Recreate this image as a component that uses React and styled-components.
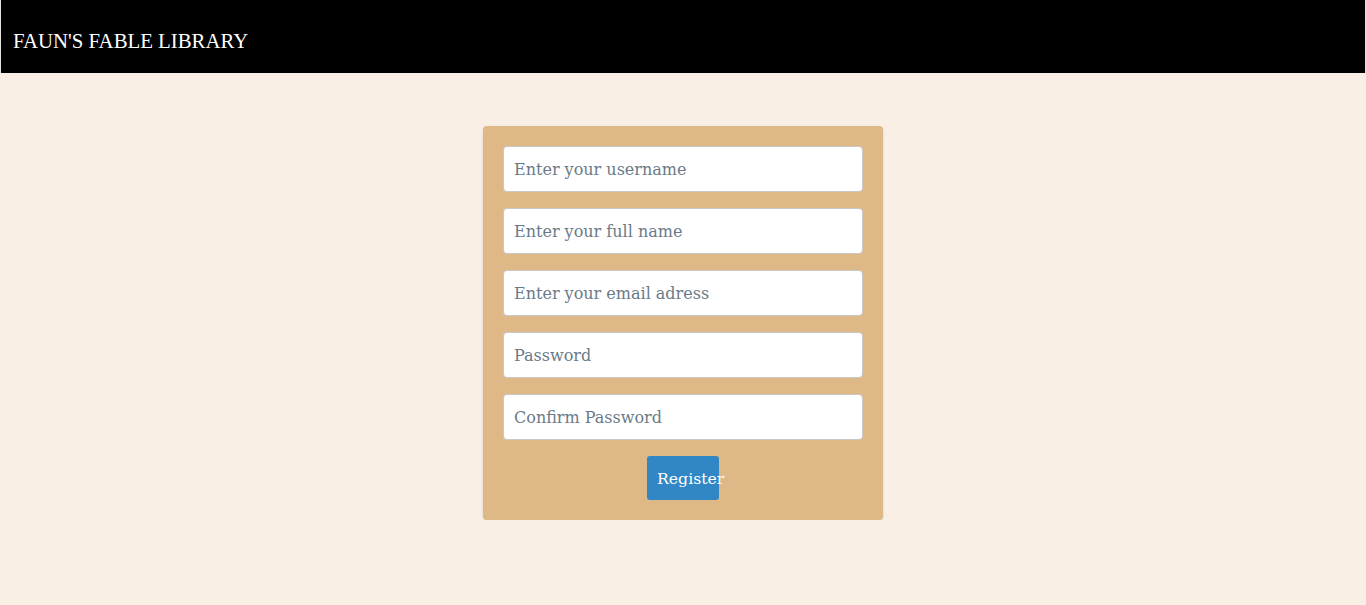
import React from "react";
import styled, { createGlobalStyle } from "styled-components";

const Global = createGlobalStyle`
  html, body { margin: 0; padding: 0; }
  body { background: #f9efe4; font-family: "DejaVu Serif", serif; }
  * { box-sizing: border-box; }
`;

const Header = styled.header`
  height: 73px;
  background: #000;
  border-left: 1px solid #e2e2e2;
  border-right: 1px solid #e2e2e2;
  display: flex;
  align-items: center;
  padding-left: 12px;
`;

const Title = styled.h1`
  margin: 0;
  color: #fff;
  font-family: "Liberation Serif", serif;
  font-weight: normal;
  font-size: 20.8px;
  padding-top: 8px;
`;

const Main = styled.main`
  display: flex;
  justify-content: center;
  padding-top: 53px;
`;

const Card = styled.form`
  width: 400px;
  background: #deb887;
  border-radius: 4px;
  box-shadow: 0 1px 3px rgba(0, 0, 0, 0.12);
  padding: 20px;
  display: flex;
  flex-direction: column;
  gap: 16px;
  align-items: center;
`;

const Input = styled.input`
  width: 360px;
  height: 46px;
  border: 1px solid #c8c8c8;
  border-radius: 4px;
  background: #fff;
  padding: 0 10px;
  font-family: "DejaVu Serif", serif;
  font-size: 16px;
  &::placeholder { color: #6b7a88; }
`;

const Button = styled.button`
  width: 72px;
  height: 44px;
  background: #3187c6;
  border: none;
  border-radius: 3px;
  color: #fff;
  font-family: "DejaVu Serif", serif;
  font-size: 15.7px;
  padding: 0 0 0 10px;
  text-align: left;
  white-space: nowrap;
  overflow: visible;
`;

export default function App() {
  return (
    <>
      <Global />
      <Header>
        <Title>FAUN'S FABLE LIBRARY</Title>
      </Header>
      <Main>
        <Card onSubmit={(e) => e.preventDefault()}>
          <Input placeholder="Enter your username" />
          <Input placeholder="Enter your full name" />
          <Input placeholder="Enter your email adress" />
          <Input type="password" placeholder="Password" />
          <Input type="password" placeholder="Confirm Password" />
          <Button type="submit">Register</Button>
        </Card>
      </Main>
    </>
  );
}
